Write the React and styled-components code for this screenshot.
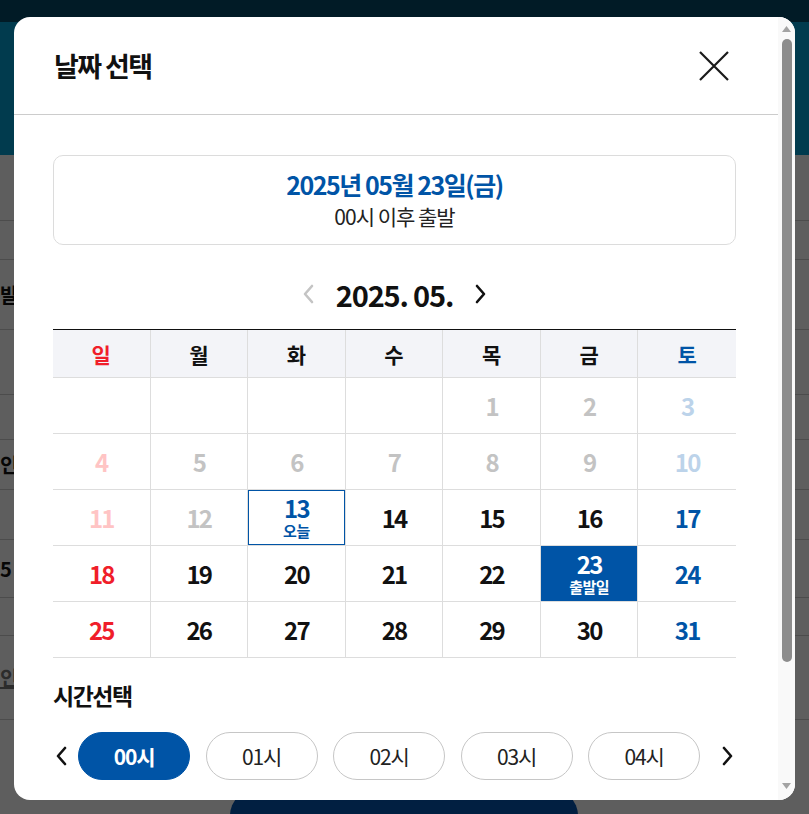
import React from 'react';
import styled, { createGlobalStyle } from 'styled-components';

const WEEK = ['일', '월', '화', '수', '목', '금', '토'];
const HOURS = ['00', '01', '02', '03', '04'];
const TODAY = 13;
const DEPART = 23;
const FIRST_WEEKDAY = 4; // 2025.05.01 = 목
const LAST_DAY = 31;

const buildCells = () => {
  const cells = [];
  for (let i = 0; i < FIRST_WEEKDAY; i++) cells.push(null);
  for (let d = 1; d <= LAST_DAY; d++) cells.push(d);
  while (cells.length % 7) cells.push(null);
  return cells;
};

const ChevronLeft = ({ color = '#111', size = 20 }) => (
  <svg width={size * 0.6} height={size} viewBox="0 0 12 20" fill="none">
    <path d="M10 2L3 10l7 8" stroke={color} strokeWidth="2.6" strokeLinecap="round" strokeLinejoin="round" />
  </svg>
);

const ChevronRight = ({ color = '#111', size = 20 }) => (
  <svg width={size * 0.6} height={size} viewBox="0 0 12 20" fill="none">
    <path d="M2 2l7 8-7 8" stroke={color} strokeWidth="2.6" strokeLinecap="round" strokeLinejoin="round" />
  </svg>
);

const App = () => {
  const cells = buildCells();

  return (
    <>
      <GlobalStyle />
      <Page>
        <TopBar />
        <Hero />
        <PageRow $h={66} />
        <PageRow $h={39} />
        <PageRow $h={70}><RowLabel>발</RowLabel></PageRow>
        <PageRow $h={65} />
        <PageRow $h={45} />
        <PageRow $h={50}><RowLabel>인</RowLabel></PageRow>
        <PageRow $h={50} />
        <PageRow $h={58}><RowLabel>5</RowLabel></PageRow>
        <PageRow $h={38} />
        <PageRow $h={84}><RowLabel $muted>인</RowLabel></PageRow>
        <BottomButton />

        <Overlay>
          <Modal>
            <ModalScroll>
              <ModalHeader>
                <ModalTitle>날짜 선택</ModalTitle>
                <CloseButton aria-label="닫기">
                  <svg width="30" height="30" viewBox="0 0 30 30">
                    <path d="M1 1L29 29M29 1L1 29" stroke="#1a1a1a" strokeWidth="2.2" />
                  </svg>
                </CloseButton>
              </ModalHeader>

              <ModalBody>
                <Summary>
                  <SummaryDate>2025년 05월 23일(금)</SummaryDate>
                  <SummaryTime>00시 이후 출발</SummaryTime>
                </Summary>

                <MonthNav>
                  <NavButton aria-label="이전 달"><ChevronLeft color="#c4c4c4" /></NavButton>
                  <MonthLabel>2025. 05.</MonthLabel>
                  <NavButton aria-label="다음 달"><ChevronRight color="#111" /></NavButton>
                </MonthNav>

                <Calendar>
                  {WEEK.map((w, i) => (
                    <WeekCell key={w} $tone={i === 0 ? 'sun' : i === 6 ? 'sat' : 'wd'}>{w}</WeekCell>
                  ))}
                  {cells.map((d, i) => {
                    const col = i % 7;
                    const tone = col === 0 ? 'sun' : col === 6 ? 'sat' : 'wd';
                    return (
                      <DayCell
                        key={i}
                        $tone={tone}
                        $disabled={d !== null && d < TODAY}
                        $today={d === TODAY}
                        $selected={d === DEPART}
                      >
                        {d !== null && <DayNum>{d}</DayNum>}
                        {d === TODAY && <DayTag>오늘</DayTag>}
                        {d === DEPART && <DayTag>출발일</DayTag>}
                      </DayCell>
                    );
                  })}
                </Calendar>

                <SectionTitle>시간선택</SectionTitle>
                <TimeRow>
                  <TimeArrow aria-label="이전 시간"><ChevronLeft /></TimeArrow>
                  <TimeList>
                    {HOURS.map((h, i) => (
                      <TimePill key={h} $active={i === 0}>{h}시</TimePill>
                    ))}
                  </TimeList>
                  <TimeArrow $right aria-label="다음 시간"><ChevronRight /></TimeArrow>
                </TimeRow>

                <ConfirmButton>선택 완료</ConfirmButton>
              </ModalBody>
            </ModalScroll>

            <ScrollRail>
              <RailArrow>
                <svg width="9" height="6" viewBox="0 0 9 6"><path d="M0 6L4.5 0L9 6Z" fill="#a3a3a3" /></svg>
              </RailArrow>
              <RailTrack>
                <RailThumb />
              </RailTrack>
              <RailArrow>
                <svg width="9" height="6" viewBox="0 0 9 6"><path d="M0 0L9 0L4.5 6Z" fill="#a3a3a3" /></svg>
              </RailArrow>
            </ScrollRail>
          </Modal>
        </Overlay>
      </Page>
    </>
  );
};

export default App;

const GlobalStyle = createGlobalStyle`
  * { box-sizing: border-box; }
  html, body { margin: 0; padding: 0; }
  body {
    font-family: "Noto Sans CJK KR", "Noto Sans", sans-serif;
    background: #fff;
    color: #111;
  }
  button { font-family: inherit; }
`;

const Page = styled.div`
  position: relative;
  width: 809px;
  height: 814px;
  overflow: hidden;
  background: #fff;
`;
const TopBar = styled.div`
  height: 22px;
  background: #054969;
`;
const Hero = styled.div`
  height: 133px;
  background: #03a0d3;
`;
const PageRow = styled.div`
  height: ${(p) => p.$h}px;
  border-bottom: 1px solid #cfcfcf;
  display: flex;
  align-items: center;
`;
const RowLabel = styled.span`
  font-size: 20px;
  font-weight: 700;
  color: ${(p) => (p.$muted ? '#777' : '#111')};
  text-decoration: ${(p) => (p.$muted ? 'underline' : 'none')};
`;
const BottomButton = styled.div`
  position: absolute;
  left: 230px;
  bottom: -30px;
  width: 348px;
  height: 56px;
  border-radius: 28px;
  background: #0454b0;
`;

const Overlay = styled.div`
  position: absolute;
  inset: 0;
  background: rgba(0, 0, 0, 0.63);
  padding: 17px 14px 14px;
  display: flex;
`;
const Modal = styled.div`
  width: 781px;
  height: 783px;
  background: #fff;
  border-radius: 16px;
  overflow: hidden;
  display: flex;
`;
const ModalScroll = styled.div`
  flex: 1;
  min-width: 0;
  overflow-y: auto;
  scrollbar-width: none;
  &::-webkit-scrollbar { display: none; }
`;
const ScrollRail = styled.div`
  width: 17px;
  flex-shrink: 0;
  background: #f9f9f9;
  display: flex;
  flex-direction: column;
  align-items: center;
  padding: 4px 0 6px;
`;
const RailArrow = styled.div`
  height: 16px;
  display: flex;
  align-items: center;
  justify-content: center;
`;
const RailTrack = styled.div`
  flex: 1;
  width: 100%;
  display: flex;
  justify-content: center;
  padding: 2px 0 0;
`;
const RailThumb = styled.div`
  width: 10px;
  height: 623px;
  border-radius: 5px;
  background: #8c8c8c;
`;
const ModalHeader = styled.div`
  height: 98px;
  border-bottom: 1px solid #cccccc;
  display: flex;
  align-items: center;
  justify-content: space-between;
  padding: 0 40px 0 40px;
`;
const ModalTitle = styled.h2`
  margin: 0;
  font-size: 27px;
  font-weight: 700;
  letter-spacing: -1.6px;
  color: #111;
`;
const CloseButton = styled.button`
  width: 44px;
  height: 44px;
  border: 0;
  background: none;
  padding: 0;
  display: flex;
  align-items: center;
  justify-content: center;
  margin-right: 2px;
  cursor: pointer;
`;
const ModalBody = styled.div`
  padding: 40px 42px 64px 39px;
`;
const Summary = styled.div`
  height: 90px;
  border: 1px solid #dcdcdc;
  border-radius: 10px;
  display: flex;
  flex-direction: column;
  align-items: center;
  justify-content: center;
  padding-bottom: 2px;
`;
const SummaryDate = styled.div`
  font-size: 25px;
  font-weight: 700;
  letter-spacing: -1.5px;
  line-height: 33px;
  color: #0054a6;
`;
const SummaryTime = styled.div`
  font-size: 21px;
  letter-spacing: -1px;
  line-height: 30px;
  color: #222;
`;
const MonthNav = styled.div`
  height: 50px;
  margin: 24px 0 10px;
  display: flex;
  align-items: center;
  justify-content: center;
  gap: 20px;
`;
const NavButton = styled.button`
  border: 0;
  background: none;
  padding: 0 2px;
  display: flex;
  align-items: center;
  cursor: pointer;
`;
const MonthLabel = styled.div`
  font-size: 29px;
  font-weight: 700;
  letter-spacing: -1.2px;
  color: #111;
`;

const toneColor = {
  sun: '#f01e2a',
  sat: '#0054a6',
  wd: '#111',
};
const toneDisabled = {
  sun: '#ffc4c4',
  sat: '#bcd3ea',
  wd: '#c3c3c3',
};

const Calendar = styled.div`
  display: grid;
  grid-template-columns: repeat(7, 1fr);
  border-top: 1px solid #111;
`;
const WeekCell = styled.div`
  height: 48px;
  display: flex;
  align-items: center;
  justify-content: center;
  background: #f3f4f8;
  border-bottom: 1px solid #dddddd;
  border-right: 1px solid #dddddd;
  font-size: 21px;
  font-weight: 700;
  color: ${(p) => toneColor[p.$tone]};
  &:nth-child(7n) { border-right: 0; }
`;
const DayCell = styled.div`
  height: 56px;
  display: flex;
  flex-direction: column;
  align-items: center;
  justify-content: center;
  border-bottom: 1px solid #dddddd;
  border-right: 1px solid #dddddd;
  &:nth-child(7n) { border-right: 0; }
  color: ${(p) =>
    p.$selected ? '#fff' : p.$disabled ? toneDisabled[p.$tone] : p.$today ? '#0054a6' : toneColor[p.$tone]};
  background: ${(p) => (p.$selected ? '#0054a6' : '#fff')};
  box-shadow: ${(p) => (p.$today ? 'inset 0 0 0 1px #0054a6' : 'none')};
`;
const DayNum = styled.span`
  font-size: 24px;
  font-weight: 700;
  letter-spacing: -1.8px;
  line-height: 26px;
`;
const DayTag = styled.span`
  font-size: 15px;
  font-weight: 700;
  letter-spacing: -0.5px;
  line-height: 20px;
`;
const SectionTitle = styled.h3`
  margin: 22px 0 0;
  font-size: 23px;
  font-weight: 700;
  letter-spacing: -1.5px;
  line-height: 30px;
  color: #111;
`;
const TimeRow = styled.div`
  margin-top: 22px;
  display: flex;
  align-items: center;
`;
const TimeArrow = styled.button`
  width: ${(p) => (p.$right ? '36px' : '25px')};
  height: 48px;
  border: 0;
  background: none;
  padding: 0 ${(p) => (p.$right ? '2px' : '0')} 0 2px;
  display: flex;
  align-items: center;
  justify-content: ${(p) => (p.$right ? 'flex-end' : 'flex-start')};
  cursor: pointer;
`;
const TimeList = styled.div`
  display: flex;
  gap: 15.5px;
`;
const TimePill = styled.button`
  width: 112px;
  height: 48px;
  border-radius: 24px;
  border: 1px solid ${(p) => (p.$active ? '#0054a6' : '#c6c6c6')};
  background: ${(p) => (p.$active ? '#0054a6' : '#fff')};
  color: ${(p) => (p.$active ? '#fff' : '#222')};
  font-size: 21px;
  font-weight: ${(p) => (p.$active ? 700 : 400)};
  letter-spacing: -1.2px;
  cursor: pointer;
`;
const ConfirmButton = styled.button`
  display: block;
  width: 100%;
  height: 56px;
  margin-top: 60px;
  border: 0;
  border-radius: 28px;
  background: #0054a6;
  color: #fff;
  font-size: 20px;
  font-weight: 700;
`;
